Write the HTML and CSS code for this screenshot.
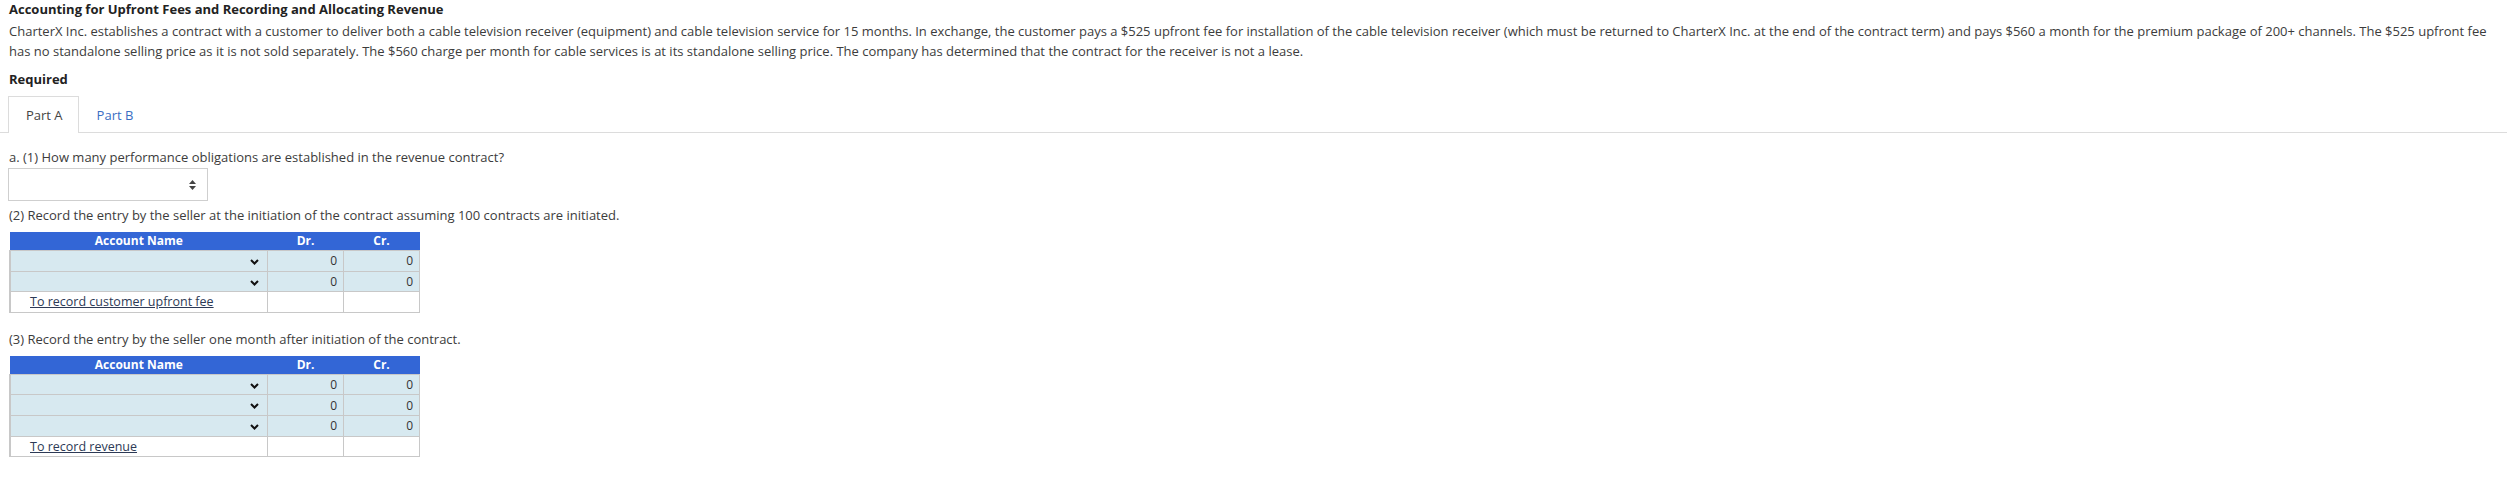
FILE: index.html
```html
<!DOCTYPE html>
<html>
<head>
<meta charset="utf-8">
<link rel="stylesheet" href="styles.css">
</head>
<body>
<div class="page">
  <h1 class="title">Accounting for Upfront Fees and Recording and Allocating Revenue</h1>
  <div class="intro">
    <span class="line">CharterX Inc. establishes a contract with a customer to deliver both a cable television receiver (equipment) and cable television service for 15 months. In exchange, the customer pays a $525 upfront fee for installation of the cable television receiver (which must be returned to CharterX Inc. at the end of the contract term) and pays $560 a month for the premium package of 200+ channels. The $525 upfront fee</span>
    <span class="line">has no standalone selling price as it is not sold separately. The $560 charge per month for cable services is at its standalone selling price. The company has determined that the contract for the receiver is not a lease.</span>
  </div>
  <div class="required">Required</div>
  <div class="tabs">
    <div class="tab active">Part A</div>
    <div class="tab">Part B</div>
  </div>
  <div class="part">
    <p class="q q-first">a. (1) How many performance obligations are established in the revenue contract?</p>
    <div class="select">
      <svg class="updown" width="7" height="10" viewBox="0 0 7 10"><path d="M3.5 0 L7 4 L0 4 Z M0 6 L7 6 L3.5 10 Z" fill="#444"/></svg>
    </div>
    <p class="q">(2) Record the entry by the seller at the initiation of the contract assuming 100 contracts are initiated.</p>
    <table class="journal">
      <thead>
        <tr><th class="c-acct">Account Name</th><th class="c-num">Dr.</th><th class="c-num">Cr.</th></tr>
      </thead>
      <tbody>
        <tr class="entry"><td class="acct"><svg class="chev" width="9" height="6" viewBox="0 0 9 6"><path d="M1 1 L4.5 4.5 L8 1" fill="none" stroke="#111" stroke-width="2"/></svg></td><td class="num">0</td><td class="num">0</td></tr>
        <tr class="entry"><td class="acct"><svg class="chev" width="9" height="6" viewBox="0 0 9 6"><path d="M1 1 L4.5 4.5 L8 1" fill="none" stroke="#111" stroke-width="2"/></svg></td><td class="num">0</td><td class="num">0</td></tr>
        <tr class="memo"><td><span class="memo-link">To record customer upfront fee</span></td><td></td><td></td></tr>
      </tbody>
    </table>
    <p class="q q-gap">(3) Record the entry by the seller one month after initiation of the contract.</p>
    <table class="journal">
      <thead>
        <tr><th class="c-acct">Account Name</th><th class="c-num">Dr.</th><th class="c-num">Cr.</th></tr>
      </thead>
      <tbody>
        <tr class="entry"><td class="acct"><svg class="chev" width="9" height="6" viewBox="0 0 9 6"><path d="M1 1 L4.5 4.5 L8 1" fill="none" stroke="#111" stroke-width="2"/></svg></td><td class="num">0</td><td class="num">0</td></tr>
        <tr class="entry"><td class="acct"><svg class="chev" width="9" height="6" viewBox="0 0 9 6"><path d="M1 1 L4.5 4.5 L8 1" fill="none" stroke="#111" stroke-width="2"/></svg></td><td class="num">0</td><td class="num">0</td></tr>
        <tr class="entry"><td class="acct"><svg class="chev" width="9" height="6" viewBox="0 0 9 6"><path d="M1 1 L4.5 4.5 L8 1" fill="none" stroke="#111" stroke-width="2"/></svg></td><td class="num">0</td><td class="num">0</td></tr>
        <tr class="memo"><td><span class="memo-link">To record revenue</span></td><td></td><td></td></tr>
      </tbody>
    </table>
  </div>
</div>
</body>
</html>
```

FILE: styles.css
```css
* { box-sizing: border-box; }
html, body { margin: 0; padding: 0; background: #fff; }
body {
  font-family: "Open Sans", "Noto Sans", sans-serif;
  font-size: 13px;
  color: #3c3c3c;
}
.page { padding: 0 0 0 9px; }
.title {
  margin: 0;
  font-size: 13px;
  font-weight: 700;
  line-height: 18px;
  color: #222;
}
.intro { margin-top: 3px; }
.intro .line {
  display: block;
  white-space: nowrap;
  line-height: 20px;
}
.required {
  margin-top: 9px;
  font-weight: 700;
  line-height: 18px;
  color: #222;
}
.tabs {
  margin-top: 8px;
  margin-left: -9px;
  padding-left: 8px;
  display: flex;
  border-bottom: 1px solid #dcdcdc;
}
.tab {
  height: 36px;
  padding: 0 15px 0 17px;
  display: flex;
  align-items: center;
  color: #3a6ec4;
  font-size: 13px;
  border: 1px solid transparent;
  border-bottom: 0;
  margin-bottom: -1px;
}
.tab.active {
  color: #444;
  border-color: #dcdcdc;
  background: #fff;
  height: 37px;
}
.part { padding-top: 15px; }
.q {
  margin: 5px 0 0 0;
  line-height: 18px;
  font-size: 13px;
  color: #3c3c3c;
}
.q-first { margin-top: 0; }
.q-gap { margin-top: 17px; }
.select {
  margin-top: 2px;
  margin-left: -1px;
  width: 200px;
  height: 33px;
  border: 1px solid #cfcfcf;
  display: flex;
  align-items: center;
  justify-content: flex-end;
  padding-right: 11px;
}
.journal {
  margin-top: 8px;
  border-collapse: collapse;
  width: 411px;
  font-size: 12px;
}
.journal th {
  background: #3366d6;
  color: #fff;
  font-weight: 700;
  height: 18px;
  padding: 0;
  text-align: center;
  font-size: 12px;
  line-height: 18px;
}
.c-acct { width: 258px; }
.c-num { width: 76px; }
.journal tbody tr { height: 20.6px; }
.journal td {
  border: 1px solid #c8c8c8;
  padding: 0 6px;
  line-height: 17px;
}
.journal tbody tr td:first-child { border-left: 2px solid #c8c8c8; }
.entry td { background: #d7e9f0; }
.acct { text-align: right; padding-right: 8px !important; }
.chev { display: inline-block; vertical-align: middle; }
.num { text-align: right; color: #333; }
.memo td { background: #fff; }
.memo-link {
  padding-left: 13px;
  font-size: 12.5px;
  text-decoration: underline;
  color: #2d3a56;
}
```
